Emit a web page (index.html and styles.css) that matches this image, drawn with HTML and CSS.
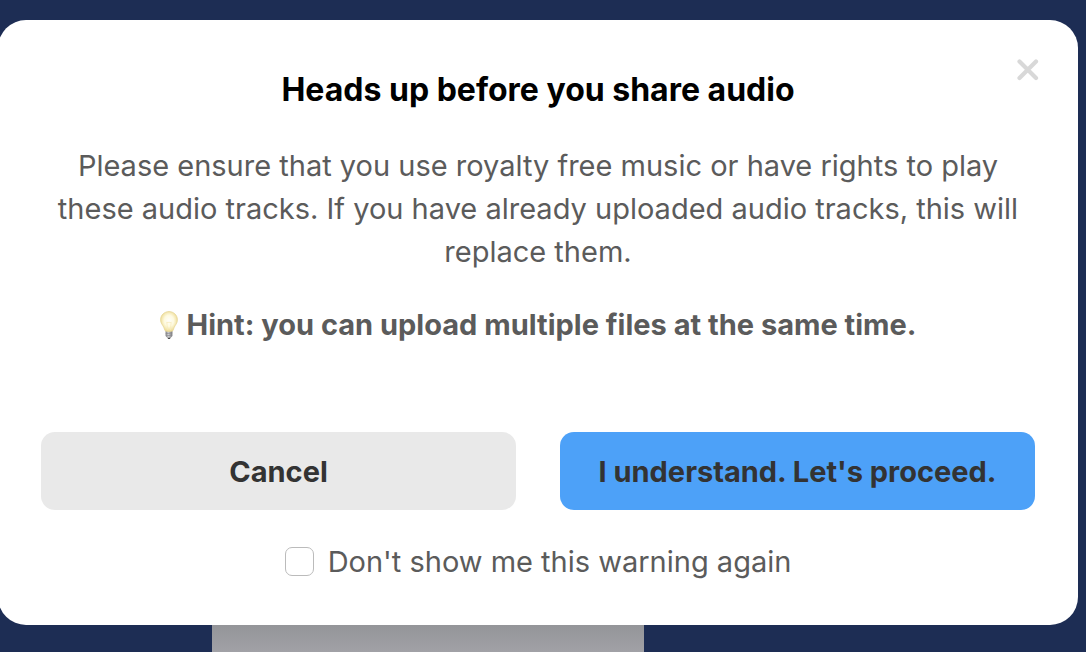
FILE: index.html
```html
<!DOCTYPE html>
<html lang="en">
<head>
    <meta charset="UTF-8">
    <meta name="viewport" content="width=device-width, initial-scale=1.0">
    <title>Share audio</title>
    <link rel="stylesheet" href="styles.css">
</head>
<body>
    <div class="modal" role="dialog" aria-labelledby="modal-title">
        <button class="close" type="button" aria-label="Close">
            <svg width="22" height="22" viewBox="0 0 22 22">
                <path d="M2.5 2.5 19 19M19 2.5 2.5 19" stroke="#d8d8d8" stroke-width="4.2" stroke-linecap="round" />
            </svg>
        </button>

        <h1 class="title" id="modal-title">Heads up before you share audio</h1>
        <p class="text">Please ensure that you use royalty free music or have rights to play these audio tracks. If you have already uploaded audio tracks, this will replace them.</p>
        <p class="hint">
            <svg class="bulb" width="18" height="28" viewBox="0 0 18 28">
                <defs>
                    <radialGradient id="glow" cx="50%" cy="46%" r="56%">
                        <stop offset="0" stop-color="#fffefa" />
                        <stop offset="0.5" stop-color="#fefae0" />
                        <stop offset="1" stop-color="#ecd88c" />
                    </radialGradient>
                    <linearGradient id="metal">
                        <stop offset="0" stop-color="#77777a" />
                        <stop offset="0.4" stop-color="#d4d4d6" />
                        <stop offset="1" stop-color="#747477" />
                    </linearGradient>
                </defs>
                <path d="M5.600 20h6.800v5l-1.400 1.600-1 1.200H8l-1-1.200L5.600 25z" fill="url(#metal)" />
                <path d="M5.700 22.600l6.600-.6M6 24.800l6-.6" stroke="#88888b" stroke-width="0.700" />
                <path d="M7.500 26.700h3l-.8 1.300H8.300z" fill="#444" />
                <path d="M9 .6C4.300.6.600 4.200.600 8.800c0 3.400 2 5.100 3.100 7.300.8 1.500.8 2.600 1.400 3.600.6 1 7.200 1 7.800 0 .6-1 .6-2.100 1.400-3.600 1.100-2.200 3.100-3.900 3.100-7.300C17.400 4.200 13.700.6 9 .6z" fill="url(#glow)" stroke="#e6d596" stroke-width="0.800" />
                <path d="M7.600 19 6.800 11l1.200.8 1-.8 1 .8 1.200-.8-.8 8" fill="none" stroke="#f8ebb9" stroke-width="0.700" />
            </svg>
            Hint: you can upload multiple files at the same time.
        </p>

        <div class="buttons">
            <button class="btn" type="button">Cancel</button>
            <button class="btn btn-proceed" type="button">I understand. Let's proceed.</button>
        </div>

        <div class="dont-show">
            <input type="checkbox" class="check" id="dont-show">
            <label for="dont-show">Don't show me this warning again</label>
        </div>
    </div>
    <div class="page-panel"></div>
</body>
</html>
```

FILE: styles.css
```css
* {
    box-sizing: border-box;
}

body {
    margin: 0;
    min-height: 100vh;
    display: flex;
    flex-direction: column;
    overflow-x: hidden;
    background-color: #1d2d54;
    font-family: Inter, "Liberation Sans", sans-serif;
    font-size: 29px;
    line-height: 43px;
    color: #5b5b5b;
}

.modal {
    position: relative;
    margin: 20px 8px 0 -2px;
    padding: 48px 43px 42px;
    border-radius: 28px;
    background-color: #fff;
    text-align: center;
}

.close {
    position: absolute;
    top: 39px;
    right: 39px;
    padding: 0;
    border: none;
    background: none;
    cursor: pointer;
}

.close svg {
    display: block;
}

.title {
    margin: 0 0 33px;
    font-size: 32px;
    line-height: 43px;
    font-weight: 700;
    color: #000;
}

.text {
    margin: 0 0 30px;
}

.hint {
    display: flex;
    justify-content: center;
    align-items: center;
    gap: 9px;
    margin: 0 0 86px;
    font-weight: 700;
}

.buttons {
    display: flex;
    gap: 44px;
    margin-bottom: 30px;
}

.btn {
    flex: 1 1 0;
    height: 78px;
    padding: 1px 0 0;
    border: none;
    border-radius: 14px;
    background-color: #e9e9e9;
    color: #333;
    font: inherit;
    font-weight: 700;
    cursor: pointer;
}

.btn-proceed {
    background-color: #4da1f8;
}

.dont-show {
    display: flex;
    justify-content: center;
    align-items: center;
    gap: 14px;
}

.check {
    appearance: none;
    width: 29px;
    height: 29px;
    margin: 0;
    border: 1px solid #bbb;
    border-radius: 7px;
    background-color: #fff;
}

.check:checked {
    background-color: #4da1f8;
}

/* page content showing under the modal */
.page-panel {
    flex: 1;
    width: 432px;
    margin-left: 212px;
    background: linear-gradient(#949599, #a1a1a6);
}
```
